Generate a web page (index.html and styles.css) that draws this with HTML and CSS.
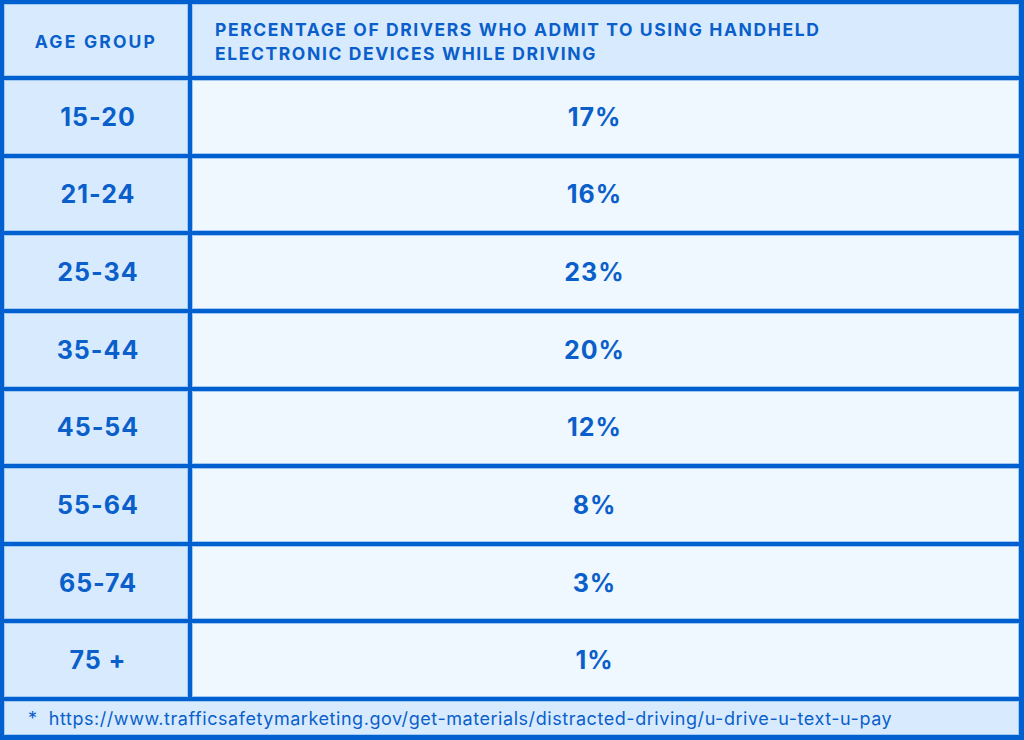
FILE: index.html
```html
<!DOCTYPE html>
<html>
<head>
<meta charset="utf-8">
<link rel="stylesheet" href="styles.css">
</head>
<body>
<div class="table">
  <div class="cell head age-head">AGE GROUP</div>
  <div class="cell head pct-head">PERCENTAGE OF DRIVERS WHO ADMIT TO USING HANDHELD<br>ELECTRONIC DEVICES WHILE DRIVING</div>
  <div class="cell age">15-20</div><div class="cell val">17%</div>
  <div class="cell age">21-24</div><div class="cell val">16%</div>
  <div class="cell age">25-34</div><div class="cell val">23%</div>
  <div class="cell age">35-44</div><div class="cell val">20%</div>
  <div class="cell age">45-54</div><div class="cell val">12%</div>
  <div class="cell age">55-64</div><div class="cell val">8%</div>
  <div class="cell age">65-74</div><div class="cell val">3%</div>
  <div class="cell age">75 +</div><div class="cell val">1%</div>
  <div class="cell foot">*&nbsp; https://www.trafficsafetymarketing.gov/get-materials/distracted-driving/u-drive-u-text-u-pay</div>
</div>
</body>
</html>
```

FILE: styles.css
```css
* { box-sizing: border-box; }
html, body { margin: 0; padding: 0; }
body {
  width: 1024px;
  height: 740px;
  font-family: Inter, "Noto Sans", sans-serif;
  color: #0a5fca;
  overflow: hidden;
}
.table {
  width: 1024px;
  height: 740px;
  background: #0060cf;
  padding: 4px 5px 5px 4px;
  display: grid;
  grid-template-columns: 184px 1fr;
  grid-template-rows: 72px repeat(8, 1fr) 34px;
  gap: 4px;
}
.cell {
  border: 1px solid #9fc8f2;
  display: flex;
  align-items: center;
}
.head {
  background: #d8ebfe;
  font-weight: 700;
  font-size: 17.5px;
  letter-spacing: 1.6px;
  line-height: 24px;
}
.age-head {
  justify-content: center;
  padding-top: 3px;
  letter-spacing: 2.2px;
}
.pct-head {
  padding-left: 22px;
  padding-top: 4px;
}
.age {
  background: #d8ebfe;
  justify-content: center;
  font-weight: 700;
  font-size: 25px;
  letter-spacing: 1px;
  padding-left: 4px;
}
.val {
  background: #eff7ff;
  justify-content: center;
  font-weight: 700;
  font-size: 25px;
  letter-spacing: 1px;
  padding-right: 22px;
}
.foot {
  grid-column: 1 / -1;
  background: #d8ebfe;
  font-size: 18px;
  letter-spacing: 0.55px;
  padding-left: 23px;
}
```
